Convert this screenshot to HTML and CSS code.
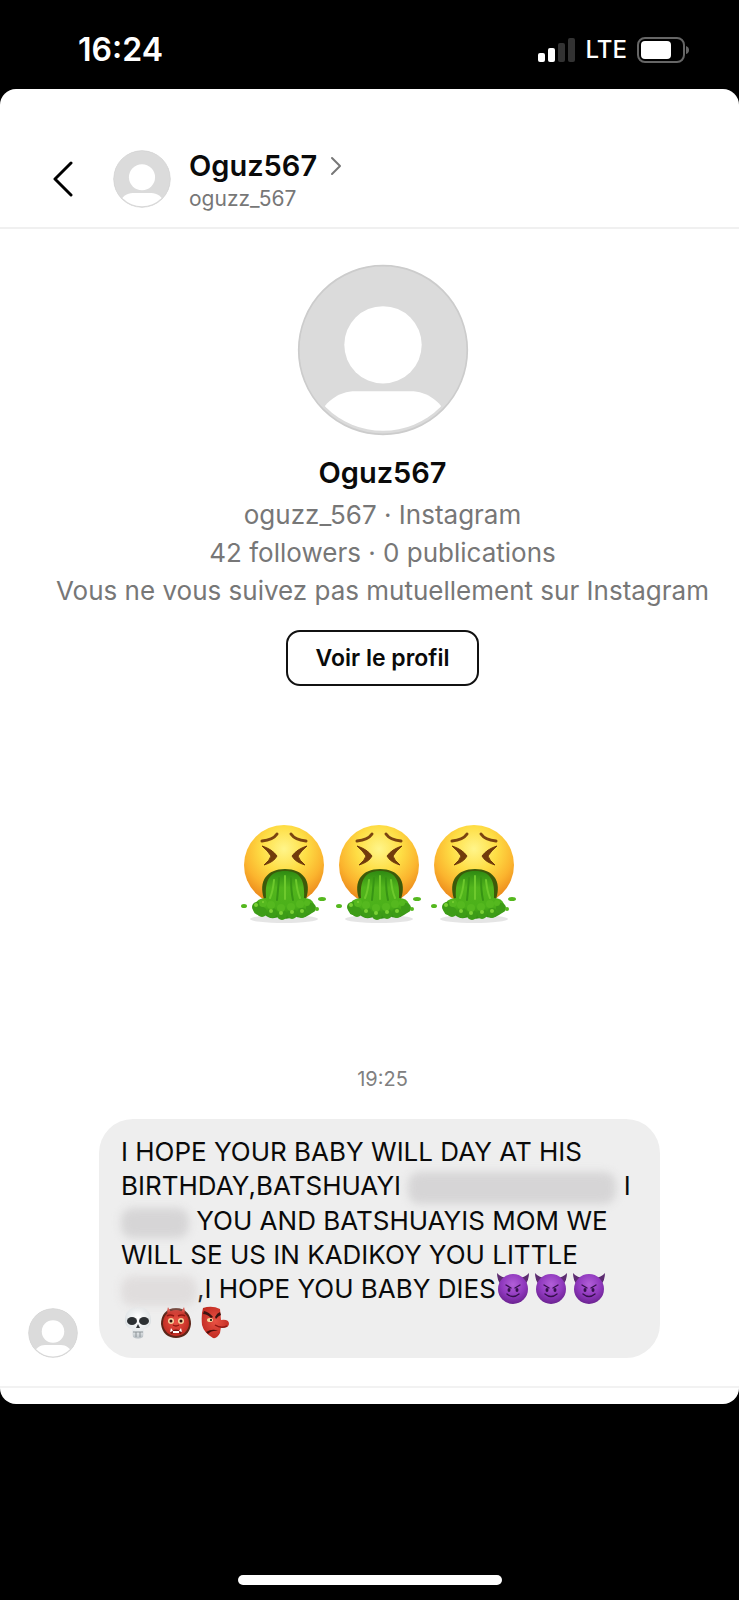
FILE: index.html
```
<!DOCTYPE html>
<html lang="fr">
<head>
  <meta charset="UTF-8">
  <meta name="viewport" content="width=device-width, initial-scale=1.0">
  <title>Oguz567</title>
  <link rel="stylesheet" href="styles.css">
</head>
<body>
  <!-- shared drawings -->
  <svg class="defs" aria-hidden="true">
    <defs>
      <radialGradient id="face" cx="50%" cy="30%" r="70%">
        <stop offset="0" stop-color="#fff58a"/>
        <stop offset="0.4" stop-color="#fede45"/>
        <stop offset="0.72" stop-color="#fbb42e"/>
        <stop offset="1" stop-color="#e98318"/>
      </radialGradient>
      <linearGradient id="slime" x1="0" y1="0" x2="0" y2="1">
        <stop offset="0" stop-color="#2f8a12"/>
        <stop offset="0.35" stop-color="#52b51c"/>
        <stop offset="0.75" stop-color="#4bb01a"/>
        <stop offset="1" stop-color="#2f8a12"/>
      </linearGradient>
      <radialGradient id="imp" cx="50%" cy="35%" r="65%">
        <stop offset="0" stop-color="#b25fd8"/>
        <stop offset="0.6" stop-color="#8f38bd"/>
        <stop offset="1" stop-color="#6b2290"/>
      </radialGradient>
      <radialGradient id="bone" cx="50%" cy="35%" r="65%">
        <stop offset="0" stop-color="#ffffff"/>
        <stop offset="0.7" stop-color="#e4e8ea"/>
        <stop offset="1" stop-color="#b4bbc0"/>
      </radialGradient>
      <radialGradient id="red" cx="50%" cy="45%" r="60%">
        <stop offset="0" stop-color="#ea5244"/>
        <stop offset="1" stop-color="#bd281f"/>
      </radialGradient>
      <clipPath id="head"><circle cx="50" cy="50" r="47"/></clipPath>
    </defs>

    <symbol id="avatar" viewBox="0 0 100 100">
      <circle cx="50" cy="50" r="49" fill="#dbdbdb" stroke="#cccccc" stroke-width="1"/>
      <circle cx="50" cy="47" r="22.500" fill="#fff"/>
      <path d="M10 92C16 80 24 74 34 74H66C76 74 84 80 90 92V100H10Z" fill="#fff" clip-path="url(#head)"/>
    </symbol>

    <symbol id="vomit" viewBox="0 0 88 100">
      <ellipse cx="44" cy="94" rx="34" ry="4" fill="#000" opacity="0.1"/>
      <circle cx="44" cy="40" r="40" fill="url(#face)"/>
      <path d="M22 16Q33 15 37 9M51 9Q55 15 66 16" fill="none" stroke="#7b4410" stroke-width="3" stroke-linecap="round"/>
      <path d="M22 21Q32 24 37 31Q34 37 24 40Q30 35 31 31Q28 26 22 21ZM67 21Q57 24 52 31Q55 37 65 40Q59 35 58 31Q61 26 67 21Z" fill="#713b0c" stroke="#713b0c" stroke-width="1" stroke-linejoin="round"/>
      <path d="M24 74C18 56 27 44 45 44S72 56 66 74Z" fill="#3c5a0a"/>
      <path d="M26 73C25 56 29 46 45 46S65 56 64 73Q72 73 74 79Q76 87 69 90Q62 95 54 91Q48 96 39 92Q30 95 25 90Q13 92 13 83Q16 73 26 73Z" fill="url(#slime)"/>
      <g fill="#3d9c17">
        <circle cx="17" cy="82" r="5"/><circle cx="22" cy="87" r="5"/><circle cx="32" cy="88" r="5"/>
        <circle cx="42" cy="90" r="5"/><circle cx="52" cy="89" r="5"/><circle cx="62" cy="88" r="5"/>
        <circle cx="71" cy="83" r="5"/>
      </g>
      <g fill="#55b81f">
        <ellipse cx="4" cy="81" rx="3" ry="2"/><ellipse cx="82" cy="74" rx="4" ry="2"/><circle cx="77" cy="84" r="2"/>
        <circle cx="23" cy="78" r="4"/><circle cx="31" cy="80" r="4"/><circle cx="41" cy="83" r="4"/>
        <circle cx="51" cy="82" r="4"/><circle cx="60" cy="79" r="4"/><circle cx="67" cy="78" r="3"/>
      </g>
      <g fill="#7bd136">
        <circle cx="16" cy="80" r="2"/><circle cx="31" cy="86" r="2"/><circle cx="41" cy="88" r="2"/>
        <circle cx="52" cy="87" r="2"/><circle cx="62" cy="86" r="2"/><circle cx="23" cy="77" r="1"/>
      </g>
      <path d="M34 55Q33 66 30 73M45 51V74M56 55Q57 66 60 73" fill="none" stroke="#6dc92c" stroke-width="2" stroke-linecap="round"/>
      <path d="M39 53Q38 66 37 75M51 53Q51 66 53 75" fill="none" stroke="#379414" stroke-width="2" stroke-linecap="round"/>
    </symbol>

    <symbol id="devil" viewBox="0 0 34 34">
      <path d="M1 1Q1 8 5 13L13 6Q5 6 1 1ZM33 1Q33 8 29 13L21 6Q29 6 33 1Z" fill="#5c2b70"/>
      <circle cx="17" cy="17" r="15" fill="url(#imp)"/>
      <path d="M10 13L15 16M24 13L19 16M11 22Q17 27 23 22" fill="none" stroke="#35104c" stroke-width="1.400" stroke-linecap="round"/>
      <ellipse cx="13" cy="18" rx="1.500" ry="2" fill="#35104c"/>
      <ellipse cx="21" cy="18" rx="1.500" ry="2" fill="#35104c"/>
    </symbol>

    <symbol id="skull" viewBox="0 0 34 34">
      <path d="M17 1C8 1 4 7 4 14C4 19 7 22 11 23L12 31Q17 34 22 31L23 23C27 22 30 19 30 14C30 7 26 1 17 1Z" fill="url(#bone)"/>
      <ellipse cx="11" cy="15" rx="5" ry="4" fill="#2c3033"/>
      <ellipse cx="23" cy="15" rx="5" ry="4" fill="#2c3033"/>
      <path d="M17 18L15 22H19Z" fill="#33373a"/>
      <path d="M12 26H22M15 26V31M19 26V31" stroke="#8b9296" stroke-width="1" fill="none"/>
    </symbol>

    <symbol id="ogre" viewBox="0 0 34 34">
      <path d="M17 2C7 2 2 9 2 18C3 27 9 32 17 32S31 27 32 18C32 9 27 2 17 2Z" fill="#5b2518"/>
      <path d="M9 1L12 6H22L25 1Q27 6 24 9H10Q7 6 9 1Z" fill="#d94035"/>
      <ellipse cx="17" cy="17" rx="13" ry="13" fill="url(#red)"/>
      <circle cx="12" cy="15" r="3" fill="#f8d7a0"/><circle cx="22" cy="15" r="3" fill="#f8d7a0"/>
      <circle cx="12" cy="15" r="1.500" fill="#32130f"/><circle cx="22" cy="15" r="1.500" fill="#32130f"/>
      <path d="M8 10Q11 8 15 10M19 10Q23 8 26 10M14 19Q17 21 20 19" stroke="#8d1711" stroke-width="1.500" fill="none"/>
      <path d="M11 25Q17 22 23 25L22 28Q17 26 12 28Z" fill="#7a120d"/>
      <path d="M11 26L12 22L14 25ZM23 26L22 22L20 25ZM14 25H20V27H14Z" fill="#fff"/>
    </symbol>

    <symbol id="goblin" viewBox="0 0 34 34">
      <path d="M6 2Q15 -1 23 3L24 14Q32 13 32 18Q31 23 24 21L23 27Q20 33 16 32Q7 27 5 19Q4 9 6 2Z" fill="url(#red)"/>
      <path d="M7 5Q12 6 16 11L14 12Q10 8 6 8ZM18 11Q20 7 23 6L24 9Q21 10 19 13Z" fill="#3c1512"/>
      <ellipse cx="13" cy="14" rx="3" ry="2" fill="#f7d79d"/><circle cx="14" cy="14" r="1" fill="#000"/>
      <path d="M18 19Q24 23 30 20" stroke="#8f1914" stroke-width="1.500" fill="none"/>
      <path d="M9 26Q16 22 21 25Q15 24 11 28Z" fill="#4c100c"/>
    </symbol>
  </svg>

  <header class="status-bar">
    <time class="clock">16:24</time>
    <div class="indicators">
      <svg class="signal" viewBox="0 0 38 24" aria-hidden="true">
        <rect x="0" y="15" width="7" height="9" rx="2" fill="#fff"/>
        <rect x="10" y="10" width="7" height="14" rx="2" fill="#fff"/>
        <rect x="20" y="5" width="7" height="19" rx="2" fill="#333"/>
        <rect x="30" y="0" width="7" height="24" rx="2" fill="#333"/>
      </svg>
      <span class="network">LTE</span>
      <svg class="battery" viewBox="0 0 52 26" aria-hidden="true">
        <rect x="1" y="1" width="46" height="24" rx="7" fill="none" stroke="#666" stroke-width="2"/>
        <rect x="4" y="4" width="30" height="18" rx="4" fill="#fff"/>
        <path d="M49 9Q52 10 52 13T49 17Z" fill="#666"/>
      </svg>
    </div>
  </header>

  <main class="sheet">
    <div class="chat-header">
      <button class="back" type="button" aria-label="Retour">
        <svg viewBox="0 0 20 36"><path d="M18 2L2 18L18 34" fill="none" stroke="#000" stroke-width="3" stroke-linecap="round" stroke-linejoin="round"/></svg>
      </button>
      <svg class="avatar avatar-medium" aria-hidden="true"><use href="#avatar"/></svg>
      <a class="contact" href="#profile">
        <span class="contact-name">Oguz567
          <svg class="chevron" viewBox="0 0 12 20" aria-hidden="true"><path d="M2 2L10 10L2 18" fill="none" stroke="#777" stroke-width="2" stroke-linecap="round" stroke-linejoin="round"/></svg>
        </span>
        <span class="contact-handle">oguzz_567</span>
      </a>
    </div>

    <section class="profile" id="profile">
      <svg class="avatar avatar-large" aria-hidden="true"><use href="#avatar"/></svg>
      <h1 class="profile-name">Oguz567</h1>
      <p class="profile-info">oguzz_567 · Instagram</p>
      <p class="profile-info">42 followers · 0 publications</p>
      <p class="profile-info">Vous ne vous suivez pas mutuellement sur Instagram</p>
      <button class="profile-button" type="button">Voir le profil</button>
    </section>

    <div class="reaction" role="img" aria-label="🤮🤮🤮">
      <svg><use href="#vomit"/></svg>
      <svg><use href="#vomit"/></svg>
      <svg><use href="#vomit"/></svg>
    </div>

    <time class="timestamp">19:25</time>

    <div class="message">
      <svg class="avatar avatar-small" aria-hidden="true"><use href="#avatar"/></svg>
      <p class="bubble">
        I HOPE YOUR BABY WILL DAY AT HIS<br>
        BIRTHDAY,BATSHUAYI <span class="masked masked-long"></span> I<br>
        <span class="masked"></span> YOU AND BATSHUAYIS MOM WE<br>
        WILL SE US IN KADIKOY YOU LITTLE<br>
        <span class="masked masked-light"></span>,I HOPE YOU BABY DIES<span class="emojis" role="img" aria-label="😈😈😈"><svg><use href="#devil"/></svg><svg><use href="#devil"/></svg><svg><use href="#devil"/></svg></span><br>
        <span class="emojis" role="img" aria-label="💀👹👺"><svg><use href="#skull"/></svg><svg><use href="#ogre"/></svg><svg><use href="#goblin"/></svg></span>
      </p>
    </div>
    <div class="composer"></div>
  </main>

  <footer class="home-area">
    <div class="home-indicator"></div>
  </footer>
</body>
</html>
```
FILE: styles.css
```
* {
  box-sizing: border-box;
}

body {
  display: flex;
  flex-direction: column;
  min-height: 100vh;
  margin: 0;
  background-color: #000;
  color: #0a0a0a;
  font-family: Inter, "Liberation Sans", sans-serif;
}

button {
  padding: 0;
  border: none;
  background: none;
  color: inherit;
  font-family: inherit;
  cursor: pointer;
}

.defs {
  position: absolute;
  width: 0;
  height: 0;
}

/* status bar */
.status-bar {
  display: flex;
  align-items: center;
  justify-content: space-between;
  height: 89px;
  padding: 10px 50px 0 78px;
  color: #fff;
}

.clock {
  font-size: 32px;
  font-weight: 600;
}

.indicators {
  display: flex;
  align-items: center;
  gap: 10px;
}

.signal {
  width: 38px;
  height: 24px;
}

.network {
  font-size: 24px;
  font-weight: 500;
}

.battery {
  width: 52px;
  height: 26px;
}

/* white sheet */
.sheet {
  overflow: hidden;
  border-radius: 16px;
  background-color: #fff;
}

.chat-header {
  display: flex;
  align-items: center;
  height: 140px;
  padding: 42px 53px 0;
  border-bottom: 2px solid #f0f0f0;
}

.back svg {
  display: block;
  width: 20px;
  height: 36px;
}

.avatar {
  flex: none;
  border-radius: 50%;
}

.avatar-medium {
  width: 58px;
  height: 58px;
  margin-left: 40px;
}

.avatar-large {
  width: 172px;
  height: 172px;
}

.avatar-small {
  width: 50px;
  height: 50px;
}

.contact {
  display: flex;
  flex-direction: column;
  margin-left: 18px;
  padding-top: 4px;
  color: inherit;
  text-decoration: none;
}

.contact-name {
  display: flex;
  align-items: center;
  gap: 13px;
  font-size: 29px;
  font-weight: 600;
  line-height: 36px;
}

.chevron {
  width: 12px;
  height: 20px;
}

.contact-handle {
  color: #777;
  font-size: 21px;
  line-height: 30px;
}

/* profile card */
.profile {
  display: flex;
  flex-direction: column;
  align-items: center;
  padding: 35px 0 0 26px;
}

.profile-name {
  margin: 18px 0 4px;
  font-size: 29px;
  font-weight: 600;
  line-height: 38px;
}

.profile-info {
  margin: 0;
  color: #777;
  font-size: 26px;
  line-height: 38px;
  white-space: nowrap;
}

.profile-button {
  width: 193px;
  height: 56px;
  margin-top: 20px;
  border: 2px solid #111;
  border-radius: 14px;
  font-size: 23px;
  font-weight: 600;
}

/* messages */
.reaction {
  display: flex;
  justify-content: center;
  gap: 7px;
  margin-top: 139px;
  padding-left: 18px;
}

.reaction svg {
  width: 88px;
  height: 100px;
}

.timestamp {
  display: block;
  margin-top: 140px;
  padding-left: 26px;
  color: #808080;
  font-size: 20px;
  line-height: 28px;
  text-align: center;
}

.message {
  display: flex;
  align-items: flex-end;
  gap: 21px;
  margin-top: 26px;
  padding: 0 79px 0 28px;
}

.bubble {
  flex: 1;
  margin: 0;
  padding: 16px 22px 18px;
  border-radius: 34px;
  background-color: #eee;
  font-size: 26px;
  line-height: 34px;
  white-space: nowrap;
}

/* words hidden by a soft smudge */
.masked {
  display: inline-block;
  width: 68px;
  height: 30px;
  border-radius: 12px;
  background-color: #d6d5d6;
  filter: blur(4px);
  vertical-align: middle;
}

.masked-long {
  width: 208px;
  height: 32px;
}

.masked-light {
  width: 76px;
  background-color: #e0dddd;
}

.emojis {
  display: inline-flex;
  gap: 4px;
  height: 34px;
  vertical-align: top;
}

.emojis svg {
  width: 34px;
  height: 34px;
}

.composer {
  height: 18px;
  margin-top: 28px;
  border-top: 2px solid #f2f2f2;
}

/* home indicator */
.home-area {
  display: flex;
  flex: 1;
  align-items: flex-end;
  justify-content: center;
  padding-bottom: 15px;
}

.home-indicator {
  width: 264px;
  height: 10px;
  border-radius: 5px;
  background-color: #fff;
}
```
